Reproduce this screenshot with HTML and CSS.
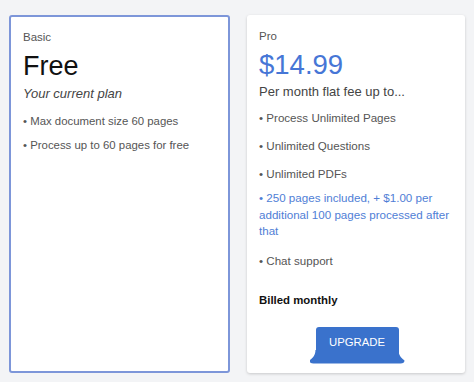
FILE: index.html
```html
<!DOCTYPE html>
<html>
<head>
    <meta charset="utf-8">
    <title>Plans</title>
    <link rel="stylesheet" href="styles.css">
</head>
<body>
    <div class="plans">
        <div class="plan current">
            <div class="plan-name">Basic</div>
            <div class="price">Free</div>
            <div class="subtitle">Your current plan</div>
            <ul class="features">
                <li>Max document size 60 pages</li>
                <li>Process up to 60 pages for free</li>
            </ul>
        </div>

        <div class="plan pro">
            <div class="plan-name">Pro</div>
            <div class="price blue">$14.99</div>
            <div class="subtitle">Per month flat fee up to...</div>
            <ul class="features">
                <li>Process Unlimited Pages</li>
                <li>Unlimited Questions</li>
                <li>Unlimited PDFs</li>
                <li class="highlight">250 pages included, + $1.00 per additional 100 pages processed after that</li>
                <li class="after-highlight">Chat support</li>
            </ul>
            <div class="billing">Billed monthly</div>
            <div class="actions">
                <button class="upgrade">UPGRADE</button>
            </div>
        </div>
    </div>
</body>
</html>
```

FILE: styles.css
```css
* {
    box-sizing: border-box;
    font-family: 'Liberation Sans', Arial, sans-serif;
}

body {
    margin: 0;
    padding: 15px 9px 9px 9px;
    background: #f3f4f6;
}

.plans {
    display: flex;
    gap: 17px;
    height: 358px;
}

.plan {
    background: white;
    border-radius: 3px;
    padding: 13px 12px;
}

.current {
    width: 221px;
    border: 2px solid #7d96d9;
    padding: 12px 12px;
}

.pro {
    width: 218px;
    box-shadow: 0 1px 3px rgba(0, 0, 0, 0.18);
}

.plan-name {
    font-size: 11.5px;
    line-height: 16px;
    color: #555;
}

.price {
    font-size: 27px;
    line-height: 32px;
    color: #111;
    margin-top: 5px;
}

.price.blue {
    color: #4676d6;
    font-size: 27.5px;
}

.subtitle {
    font-size: 13px;
    line-height: 18px;
    color: #444;
    margin-top: 3px;
}

.current .subtitle {
    font-style: italic;
}

.pro .subtitle {
    margin-top: 2px;
}

.features {
    list-style: none;
    margin: 0;
    padding: 0;
}

.features li {
    font-size: 11.4px;
    line-height: 16px;
    color: #555;
    margin-top: 8px;
}

.current .features li:first-child {
    margin-top: 10px;
}

.pro .features li {
    font-size: 11.6px;
    margin-top: 12px;
}

.pro .features li:first-child {
    margin-top: 9px;
}

.features li::before {
    content: "• ";
}

.pro .features li.highlight {
    color: #4f7ed6;
    line-height: 16.5px;
    margin-top: 8px;
}

.pro .features li.after-highlight {
    margin-top: 13px;
}

.billing {
    font-size: 11.4px;
    line-height: 16px;
    font-weight: 700;
    color: #111;
    margin-top: 23px;
}

.actions {
    display: flex;
    justify-content: center;
    margin-top: 19px;
}

.upgrade {
    position: relative;
    width: 83px;
    height: 30px;
    background: #3a72cc;
    color: white;
    border: none;
    border-radius: 3px;
    padding: 0;
    font-size: 11.3px;
    margin-left: 2px;
}

.upgrade::after {
    content: "";
    position: absolute;
    left: -6px;
    bottom: -7px;
    width: 95px;
    height: 14px;
    background: #3a72cc;
    clip-path: path("M6,0 H89 C89,7 93,9 95,11 Q95,14 91,14 H4 Q0,14 0,11 C2,9 6,7 6,0 Z");
}
```
